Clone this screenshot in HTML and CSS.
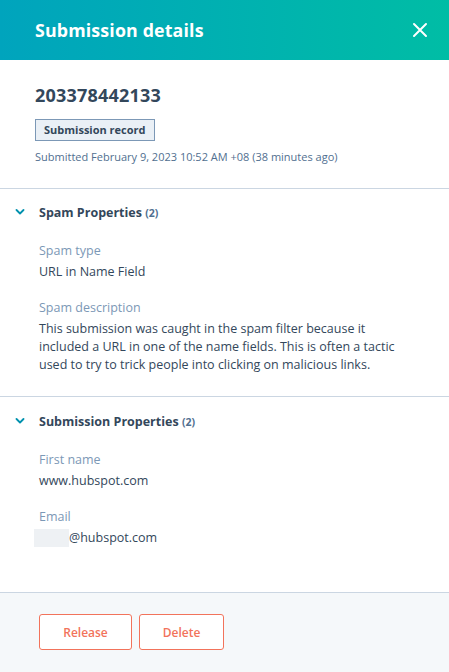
FILE: index.html
```html
<!DOCTYPE html>
<html>
<head>
<meta charset="utf-8">
<link rel="stylesheet" href="styles.css">
</head>
<body>
<div class="panel">
  <header class="header">
    <h1 class="title">Submission details</h1>
    <svg class="close" width="16" height="16" viewBox="0 0 16 16"><path d="M2 2 L14 14 M14 2 L2 14" stroke="#fff" stroke-width="2" stroke-linecap="round"/></svg>
  </header>
  <section class="summary">
    <div class="record-id">203378442133</div>
    <span class="tag">Submission record</span>
    <div class="submitted">Submitted February 9, 2023 10:52 AM +08 (38 minutes ago)</div>
  </section>
  <section class="group">
    <div class="group-head">
      <svg class="chev" width="10" height="6" viewBox="0 0 10 6"><path d="M1.5 1 L5 4.5 L8.5 1" fill="none" stroke="#0091ae" stroke-width="1.8" stroke-linecap="round" stroke-linejoin="round"/></svg>
      <span class="group-title">Spam Properties <span class="count">(2)</span></span>
    </div>
    <div class="prop">
      <div class="label">Spam type</div>
      <div class="value">URL in Name Field</div>
    </div>
    <div class="prop">
      <div class="label">Spam description</div>
      <div class="value">This submission was caught in the spam filter because it included a URL in one of the name fields. This is often a tactic used to try to trick people into clicking on malicious links.</div>
    </div>
  </section>
  <section class="group last">
    <div class="group-head">
      <svg class="chev" width="10" height="6" viewBox="0 0 10 6"><path d="M1.5 1 L5 4.5 L8.5 1" fill="none" stroke="#0091ae" stroke-width="1.8" stroke-linecap="round" stroke-linejoin="round"/></svg>
      <span class="group-title">Submission Properties <span class="count">(2)</span></span>
    </div>
    <div class="prop">
      <div class="label">First name</div>
      <div class="value">www.hubspot.com</div>
    </div>
    <div class="prop">
      <div class="label">Email</div>
      <div class="value email"><span class="redact"></span>@hubspot.com</div>
    </div>
  </section>
  <footer class="footer">
    <button class="btn btn-release">Release</button>
    <button class="btn btn-delete">Delete</button>
  </footer>
</div>
</body>
</html>
```
FILE: styles.css
```css
* { box-sizing: border-box; }
html, body { margin: 0; padding: 0; }
body {
  width: 449px;
  height: 672px;
  overflow: hidden;
  font-family: "Open Sans", "Liberation Sans", sans-serif;
  color: #33475b;
  background: #fff;
}
.panel {
  display: flex;
  flex-direction: column;
  height: 672px;
}
.header {
  height: 60px;
  flex: none;
  background: linear-gradient(90deg, #00a4bd 0%, #00bda5 100%);
  display: flex;
  align-items: center;
  justify-content: space-between;
  padding: 0 21px 0 35px;
}
.title {
  margin: 0;
  color: #fff;
  font-size: 17.8px;
  font-weight: 700;
  letter-spacing: 0.15px;
}
.close { display: block; }
.summary {
  padding: 23px 35px 23px;
  border-bottom: 1px solid #cbd6e2;
}
.record-id {
  font-size: 18px;
  font-weight: 700;
  line-height: 24px;
  letter-spacing: 0.2px;
}
.tag {
  display: inline-block;
  margin-top: 12px;
  height: 22px;
  line-height: 20px;
  padding: 0 8px;
  border: 1px solid #7c98b6;
  background: #eaf0f6;
  font-size: 11px;
  font-weight: 700;
  color: #33475b;
}
.submitted {
  margin-top: 8px;
  font-size: 11px;
  line-height: 16px;
  color: #516f90;
}
.group {
  padding: 12px 0 22px 39px;
  border-bottom: 1px solid #cbd6e2;
}
.group.last { border-bottom: none; flex: 1; padding-top: 13px; }
.group-head {
  position: relative;
  height: 22px;
  display: flex;
  align-items: center;
}
.chev {
  position: absolute;
  left: -24px;
  top: 8px;
}
.group-title {
  font-size: 12.5px;
  font-weight: 700;
  color: #33475b;
}
.count {
  font-size: 10.5px;
  color: #516f90;
}
.prop { margin-top: 19px; }
.prop + .prop { margin-top: 18px; }
.label {
  font-size: 12.5px;
  line-height: 18px;
  color: #7c98b6;
}
.value {
  margin-top: 3px;
  font-size: 12.5px;
  line-height: 18px;
  color: #33475b;
  padding-right: 32px;
}
.email {
  display: flex;
  align-items: center;
  margin-left: -5px;
}
.redact {
  display: inline-block;
  width: 35px;
  height: 18px;
  background: #eef1f4;
}
.footer {
  flex: none;
  height: 80px;
  border-top: 1px solid #cbd6e2;
  background: #f5f8fa;
  display: flex;
  align-items: flex-start;
  gap: 7px;
  padding: 21px 0 0 39px;
}
.btn {
  height: 36px;
  border: 1px solid #f2735b;
  border-radius: 3px;
  background: #fff;
  color: #f2735b;
  font-family: inherit;
  font-size: 12px;
  font-weight: 600;
  padding: 0;
}
.btn-release { width: 93px; }
.btn-delete { width: 85px; }
```
